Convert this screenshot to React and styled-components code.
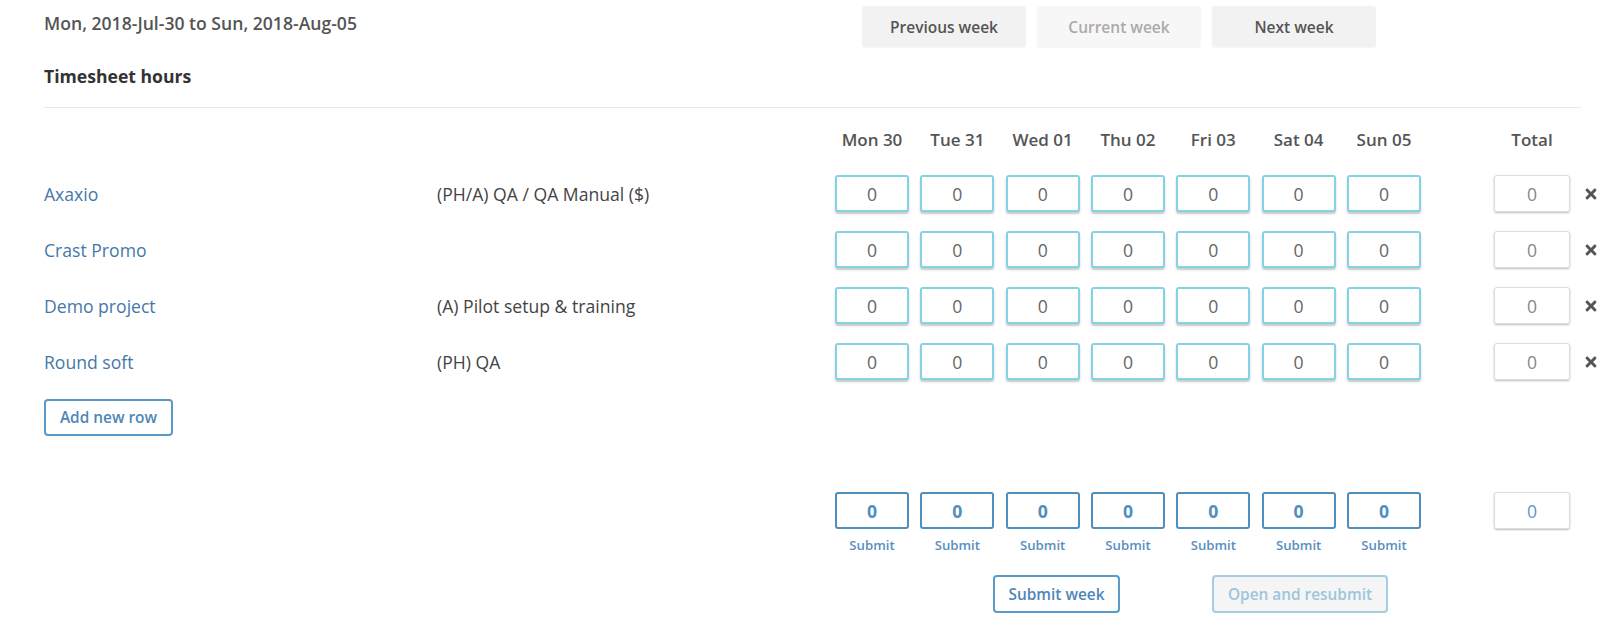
import React from 'react'
import styled, { createGlobalStyle } from 'styled-components'
import { FaTimes } from 'react-icons/fa'

const GlobalStyle = createGlobalStyle`
body{
  margin:0;
  background:#fff;
  font-family:"Open Sans","Noto Sans",sans-serif;
  color:#444;
}
`

const days = ['Mon 30', 'Tue 31', 'Wed 01', 'Thu 02', 'Fri 03', 'Sat 04', 'Sun 05']

const rows = [
  { project: 'Axaxio', task: '(PH/A) QA / QA Manual ($)' },
  { project: 'Crast Promo', task: '' },
  { project: 'Demo project', task: '(A) Pilot setup & training' },
  { project: 'Round soft', task: '(PH) QA' },
]

function App() {
  return (
    <Page>
      <GlobalStyle />
      <TopBar>
        <DateRange>Mon, 2018-Jul-30 to Sun, 2018-Aug-05</DateRange>
        <WeekNav>
          <NavButton>Previous week</NavButton>
          <NavButton disabled>Current week</NavButton>
          <NavButton>Next week</NavButton>
        </WeekNav>
      </TopBar>

      <Title>Timesheet hours</Title>
      <Divider />

      <HeadRow>
        <ProjectCell />
        <TaskCell />
        <Days>
          {days.map(d => <DayLabel key={d}>{d}</DayLabel>)}
        </Days>
        <TotalLabel>Total</TotalLabel>
      </HeadRow>

      <Body>
        {rows.map(r => (
          <Row key={r.project}>
            <ProjectCell><ProjectLink href="#">{r.project}</ProjectLink></ProjectCell>
            <TaskCell>{r.task}</TaskCell>
            <Days>
              {days.map(d => <HourInput key={d} defaultValue="0" />)}
            </Days>
            <TotalBox>0</TotalBox>
            <Remove><FaTimes /></Remove>
          </Row>
        ))}
        <AddButton>Add new row</AddButton>
      </Body>

      <SumRow>
        <ProjectCell />
        <TaskCell />
        <Days>
          {days.map(d => (
            <SumCol key={d}>
              <SumBox>0</SumBox>
              <SubmitLink href="#">Submit</SubmitLink>
            </SumCol>
          ))}
        </Days>
        <TotalBox blue>0</TotalBox>
      </SumRow>

      <Actions>
        <OutlineButton>Submit week</OutlineButton>
        <OutlineButton disabled>Open and resubmit</OutlineButton>
      </Actions>
    </Page>
  )
}

export default App

const Page = styled.div`
padding:6px 31px 20px 44px;
overflow:hidden;
`

const TopBar = styled.div`
display:flex;
align-items:flex-start;
`

const DateRange = styled.div`
width:818px;
flex-shrink:0;
margin-top:5px;
font-size:17.6px;
line-height:24px;
font-weight:600;
color:#555;
`

const WeekNav = styled.div`
display:flex;
gap:11px;
`

const NavButton = styled.button`
width:164px;
height:41px;
border:none;
border-radius:3px;
background:${p => p.disabled ? '#f8f7f7' : '#f3f2f2'};
box-shadow:0 1px 1px rgba(0,0,0,.04);
font-family:inherit;
font-size:15.5px;
font-weight:600;
color:${p => p.disabled ? '#aaa' : '#555'};
cursor:${p => p.disabled ? 'default' : 'pointer'};
`

const Title = styled.div`
margin-top:17px;
font-size:17.6px;
line-height:24px;
font-weight:700;
color:#333;
`

const Divider = styled.div`
margin-top:19px;
height:1px;
background:#e9e9e9;
`

const HeadRow = styled.div`
display:flex;
align-items:center;
height:30px;
margin-top:16px;
`

const ProjectCell = styled.div`
width:393px;
flex-shrink:0;
font-size:17.6px;
`

const TaskCell = styled.div`
width:398px;
flex-shrink:0;
font-size:17.6px;
color:#444;
`

const Days = styled.div`
display:flex;
flex-shrink:0;
gap:11.33px;
`

const DayLabel = styled.div`
width:74px;
text-align:center;
white-space:nowrap;
font-size:17px;
font-weight:600;
color:#555;
`

const TotalLabel = styled.div`
width:76px;
flex-shrink:0;
margin-left:73px;
text-align:center;
font-size:17px;
font-weight:600;
color:#555;
`

const Body = styled.div`
display:flex;
flex-direction:column;
gap:19px;
margin-top:21px;
`

const Row = styled.div`
display:flex;
align-items:center;
height:37px;
`

const ProjectLink = styled.a`
color:#4677a8;
text-decoration:none;
`

const HourInput = styled.input`
box-sizing:border-box;
width:74px;
height:37px;
border:2px solid #84d3e5;
border-radius:3px;
box-shadow:0 2px 2px rgba(0,0,0,.22);
text-align:center;
font-family:inherit;
font-size:17.6px;
color:#666;
outline:none;
`

const TotalBox = styled.div`
box-sizing:border-box;
flex-shrink:0;
width:76px;
height:37px;
margin-left:73px;
display:flex;
align-items:center;
justify-content:center;
border:1px solid #ddd;
border-radius:3px;
box-shadow:0 1px 2px rgba(0,0,0,.28);
font-size:17.6px;
color:${p => p.blue ? '#5c96c8' : '#888'};
`

const Remove = styled.span`
flex-shrink:0;
margin-left:13px;
display:flex;
color:#555;
font-size:16px;
cursor:pointer;
`

const AddButton = styled.button`
align-self:flex-start;
box-sizing:border-box;
width:129px;
height:37px;
border:2px solid #5a9ac7;
border-radius:4px;
background:#fff;
font-family:inherit;
font-size:15.4px;
font-weight:600;
color:#4f86b8;
cursor:pointer;
`

const SumRow = styled.div`
display:flex;
align-items:flex-start;
margin-top:56px;
`

const SumCol = styled.div`
display:flex;
flex-direction:column;
align-items:center;
`

const SumBox = styled.div`
box-sizing:border-box;
width:74px;
height:37px;
display:flex;
align-items:center;
justify-content:center;
border:2px solid #4f8fc0;
border-radius:3px;
font-size:17.6px;
font-weight:700;
color:#4f8fc0;
`

const SubmitLink = styled.a`
margin-top:7px;
font-size:13.2px;
line-height:18px;
font-weight:600;
color:#5a8fc0;
text-decoration:none;
`

const Actions = styled.div`
display:flex;
gap:92px;
padding-left:949px;
margin-top:21px;
`

const OutlineButton = styled.button`
box-sizing:border-box;
height:38px;
width:${p => p.disabled ? '176px' : '127px'};
padding:0;
border:2px solid ${p => p.disabled ? '#a2cde2' : '#5a9ac7'};
border-radius:4px;
background:${p => p.disabled ? '#f5f5f5' : '#fff'};
font-family:inherit;
font-size:15.4px;
font-weight:600;
color:${p => p.disabled ? '#9cc6dd' : '#4f86b8'};
cursor:${p => p.disabled ? 'default' : 'pointer'};
`
